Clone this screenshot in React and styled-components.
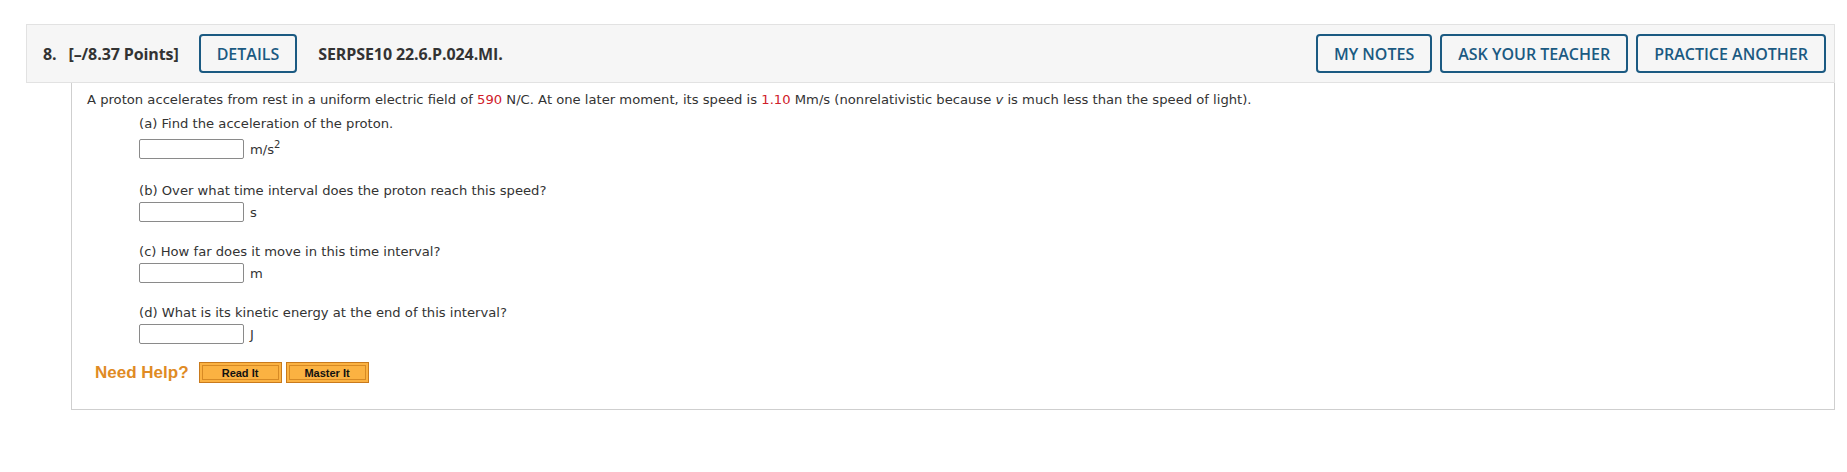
import React from "react";
import styled, { createGlobalStyle } from "styled-components";

const Global = createGlobalStyle`
  html, body { margin: 0; padding: 0; background: #fff; }
  body { font-family: Verdana, "DejaVu Sans", sans-serif; }
  * { box-sizing: border-box; }
`;

const Page = styled.div`
  padding: 24px 12px 0 26px;
  width: 1847px;
`;

const Header = styled.div`
  display: flex;
  align-items: center;
  height: 59px;
  padding: 0 8px 0 16px;
  background: #f6f6f6;
  border: 1px solid #e2e2e2;
  font-family: "Open Sans", sans-serif;
`;

const Title = styled.div`
  display: flex;
  align-items: center;
  font-size: 16px;
  font-weight: 700;
  color: #333;
  margin-right: ${(p) => p.$mr || 0}px;
  letter-spacing: -0.1px;
`;

const Num = styled.span`
  margin-right: 12px;
`;

const OutlineButton = styled.button`
  height: 39px;
  padding: 0 ${(p) => p.$px || 16}px;
  border: 2px solid #1b5a82;
  border-radius: 4px;
  background: transparent;
  color: #1b5a82;
  font-family: "Open Sans", sans-serif;
  font-size: 16px;
  font-weight: 600;
  margin-right: ${(p) => p.$mr || 0}px;
  cursor: pointer;
`;

const Spacer = styled.div`
  flex: 1;
`;

const RightGroup = styled.div`
  display: flex;
  gap: 8px;
`;

const Body = styled.div`
  margin-left: 45px;
  border: 1px solid #cfcfcf;
  border-top: none;
  padding: 8px 15px 26px 15px;
  color: #333;
  font-family: Verdana, "DejaVu Sans", sans-serif;
  font-size: 13.15px;
`;

const Para = styled.p`
  margin: 0 0 6px 0;
  line-height: 18px;
`;

const Red = styled.span`
  color: #d0202a;
`;

const Question = styled.div`
  margin-left: 52px;
  margin-bottom: ${(p) => (p.$tall ? 23 : 21)}px;
`;

const Label = styled.div`
  line-height: 18px;
`;

const AnswerRow = styled.div`
  display: flex;
  align-items: center;
  height: 20px;
  margin-top: ${(p) => (p.$tall ? 6 : 2)}px;
`;

const Input = styled.input`
  width: 105px;
  height: 20px;
  border: 1px solid #8a8a8a;
  border-radius: 2px;
  background: #fff;
  margin: 0 6px 0 0;
  padding: 0;
`;

const Unit = styled.span`
  color: #333;
`;

const Sup = styled.sup`
  font-size: 10px;
  position: relative;
  top: -1px;
`;

const HelpRow = styled.div`
  display: flex;
  align-items: center;
  margin-left: 8px;
  margin-top: -3px;
  height: 21px;
`;

const HelpLabel = styled.span`
  font-family: "Liberation Sans", Arial, sans-serif;
  font-weight: 700;
  font-size: 17px;
  color: #e08b24;
  margin-right: 10px;
`;

const HelpButton = styled.button`
  width: 83px;
  height: 21px;
  margin-right: 4px;
  padding: 0;
  border: 1px solid #c97a1c;
  background: #fbb242;
  box-shadow: inset 0 0 0 2px #fbb242, inset 0 0 0 3px #d78a24;
  font-family: "Liberation Sans", Arial, sans-serif;
  font-weight: 700;
  font-size: 11px;
  color: #111;
  cursor: pointer;
`;

const questions = [
  { label: "(a) Find the acceleration of the proton.", unit: <>m/s<Sup>2</Sup></>, tall: true },
  { label: "(b) Over what time interval does the proton reach this speed?", unit: "s" },
  { label: "(c) How far does it move in this time interval?", unit: "m" },
  { label: "(d) What is its kinetic energy at the end of this interval?", unit: "J" },
];

export default function App() {
  return (
    <>
      <Global />
      <Page>
        <Header>
          <Title $mr={20}>
            <Num>8.</Num>[–/8.37 Points]
          </Title>
          <OutlineButton $px={16} $mr={21}>DETAILS</OutlineButton>
          <Title>SERPSE10 22.6.P.024.MI.</Title>
          <Spacer />
          <RightGroup>
            <OutlineButton>MY NOTES</OutlineButton>
            <OutlineButton>ASK YOUR TEACHER</OutlineButton>
            <OutlineButton>PRACTICE ANOTHER</OutlineButton>
          </RightGroup>
        </Header>
        <Body>
          <Para>
            A proton accelerates from rest in a uniform electric field of <Red>590</Red> N/C. At one later
            moment, its speed is <Red>1.10</Red> Mm/s (nonrelativistic because <i>v</i> is much less than the
            speed of light).
          </Para>
          {questions.map((q) => (
            <Question key={q.label} $tall={q.tall}>
              <Label>{q.label}</Label>
              <AnswerRow $tall={q.tall}>
                <Input type="text" />
                <Unit>{q.unit}</Unit>
              </AnswerRow>
            </Question>
          ))}
          <HelpRow>
            <HelpLabel>Need Help?</HelpLabel>
            <HelpButton>Read It</HelpButton>
            <HelpButton>Master It</HelpButton>
          </HelpRow>
        </Body>
      </Page>
    </>
  );
}
